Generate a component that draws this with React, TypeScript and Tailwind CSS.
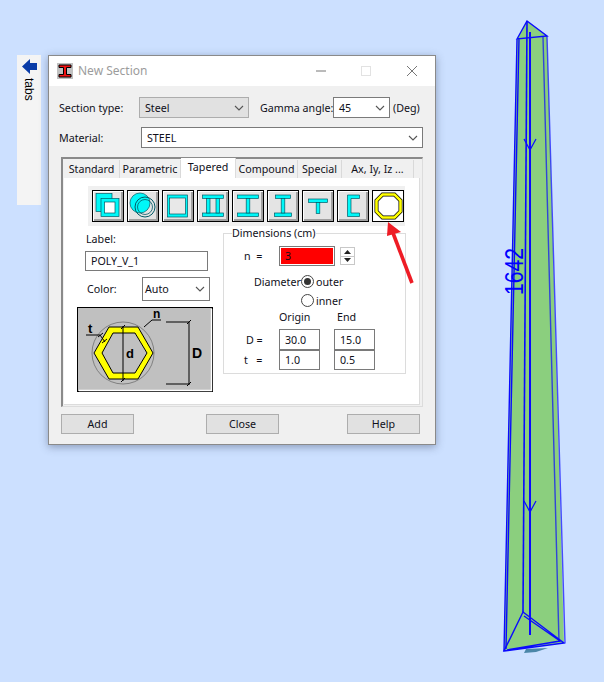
const Chevron = () => (
  <svg width="10" height="6" viewBox="0 0 10 6" className="shrink-0">
    <path d="M1 1l4 4 4-4" fill="none" stroke="#555" strokeWidth="1.1" />
  </svg>
);

const Select = ({ value, className }: { value: string; className: string }) => (
  <div className={`flex items-center justify-between pr-[4px] ${className}`}>
    <span>{value}</span>
    <Chevron />
  </div>
);

const Field = ({ value, className }: { value: string; className: string }) => (
  <div className={`flex items-center border border-[#7a7a7a] ${className}`}>{value}</div>
);

const C = '#00f8f8';
const K = '#005a66';

const TOOL_ICONS = [
  <>
    <rect x="4" y="3.5" width="16" height="18" fill={C} stroke={K} strokeWidth="0.7" />
    <rect x="9" y="8.5" width="18" height="18" fill={C} stroke={K} strokeWidth="0.7" />
    <rect x="12.5" y="12" width="10.5" height="11" fill="#fff" stroke={K} strokeWidth="0.7" />
  </>,
  <>
    <circle cx="13" cy="13" r="10" fill={C} stroke={K} strokeWidth="0.7" />
    <circle cx="18" cy="17" r="10" fill="none" stroke={K} strokeWidth="1" />
    <circle cx="18" cy="17" r="7.5" fill="none" stroke={K} strokeWidth="0.8" />
  </>,
  <>
    <rect x="5.5" y="5" width="20" height="22" fill={C} stroke={K} strokeWidth="0.7" />
    <rect x="7.5" y="8" width="16" height="16" fill="#e8e8e8" stroke={K} strokeWidth="0.7" />
  </>,
  <>
    <rect x="5.5" y="5" width="21" height="3.5" fill={C} stroke={K} strokeWidth="0.7" />
    <rect x="5.5" y="23" width="21" height="3.5" fill={C} stroke={K} strokeWidth="0.7" />
    <rect x="9.5" y="8.5" width="3.5" height="14.5" fill={C} stroke={K} strokeWidth="0.7" />
    <rect x="19" y="8.5" width="3.5" height="14.5" fill={C} stroke={K} strokeWidth="0.7" />
  </>,
  <>
    <rect x="5.5" y="5" width="21" height="3.5" fill={C} stroke={K} strokeWidth="0.7" />
    <rect x="5.5" y="23" width="21" height="3.5" fill={C} stroke={K} strokeWidth="0.7" />
    <rect x="14.2" y="8.5" width="3.6" height="14.5" fill={C} stroke={K} strokeWidth="0.7" />
  </>,
  <>
    <rect x="8.5" y="5" width="15" height="3.5" fill={C} stroke={K} strokeWidth="0.7" />
    <rect x="7.5" y="23" width="17" height="3.5" fill={C} stroke={K} strokeWidth="0.7" />
    <rect x="14.2" y="8.5" width="3.6" height="14.5" fill={C} stroke={K} strokeWidth="0.7" />
  </>,
  <>
    <rect x="6.5" y="9" width="19" height="3.5" fill={C} stroke={K} strokeWidth="0.7" />
    <rect x="14.2" y="12.5" width="3.6" height="11" fill={C} stroke={K} strokeWidth="0.7" />
  </>,
  <>
    <path d="M10.5 5h12v3.5h-8.5v14.5h8.5v3.5h-12z" fill={C} stroke={K} strokeWidth="0.7" />
  </>,
  <>
    <path d="M10.5 4.5h12l6 6v11l-6 6h-12l-6-6v-11z" fill="none" stroke="#000" strokeWidth="4" />
    <path d="M10.5 4.5h12l6 6v11l-6 6h-12l-6-6v-11z" fill="none" stroke="#ffff00" strokeWidth="2.6" />
  </>,
];

const ToolButton = ({ index, selected }: { index: number; selected: boolean }) => (
  <div
    className={`h-[32px] w-[32px] border border-black ${
      selected ? 'bg-white' : 'bg-[#e4e4e4] shadow-[inset_1px_1px_0_#fff,inset_-2px_-2px_0_#a0a0a0]'
    }`}
  >
    <svg width="30" height="30" viewBox="1 1 30 30">
      {TOOL_ICONS[index]}
    </svg>
  </div>
);

const TABS = [
  { label: 'Standard', width: 'w-[56px]' },
  { label: 'Parametric', width: 'w-[61px]' },
  { label: 'Tapered', width: 'w-[55px]', active: true },
  { label: 'Compound', width: 'w-[62px]' },
  { label: 'Special', width: 'w-[44px]' },
  { label: 'Ax, Iy, Iz ...', width: 'w-[72px]' },
];

const SectionPicture = () => (
  <svg width="136" height="85" viewBox="0 0 136 85" className="block">
    <rect x="0.5" y="0.5" width="135" height="84" fill="#c0c0c0" stroke="#000" />
    <path d="M134.5 2v81.5H2" fill="none" stroke="#fff" strokeWidth="1.4" />
    <circle cx="46" cy="46" r="31" fill="none" stroke="#808080" />
    <path
      d="M32 20h29l15 26-15 26H32L17 46zM36 26l-11 20 11 20h22l12-20-12-20z"
      fill="#ffff00"
      stroke="#000"
      fillRule="evenodd"
    />
    <path d="M46 19v55M112 15v63M89 15h23M89 77h23M75 13h9M75 13l-8 7M9 28h14l5 7" fill="none" stroke="#000" />
    <path d="M44 22l4-4M44 75l4-4M110 17l4-4M110 79l4-4M21 30l5-4M25 36l5-4" fill="none" stroke="#000" />
    <text x="49" y="51" fontSize="13" fontWeight="700" fontFamily="Liberation Sans, sans-serif">d</text>
    <text x="115" y="51" fontSize="14" fontWeight="700" fontFamily="Liberation Sans, sans-serif">D</text>
    <text x="76" y="11" fontSize="12" fontWeight="700" fontFamily="Liberation Sans, sans-serif">n</text>
    <text x="11" y="26" fontSize="13" fontWeight="700" fontFamily="Liberation Sans, sans-serif">t</text>
  </svg>
);

const Radio = ({ checked }: { checked?: boolean }) => (
  <span className="flex h-[13px] w-[13px] items-center justify-center rounded-full border border-[#444] bg-white">
    {checked && <span className="h-[7px] w-[7px] rounded-full bg-[#333]" />}
  </span>
);

const SpinTriangle = ({ up }: { up?: boolean }) => (
  <svg width="7" height="4" viewBox="0 0 7 4">
    <path d={up ? 'M3.5 0L7 4H0z' : 'M0 0h7L3.5 4z'} fill="#222" />
  </svg>
);

const Tower = () => (
  <svg width="604" height="682" viewBox="0 0 604 682" className="absolute inset-0">
    <path d="M517 39L527 21 547 36 564 643 504 651z" fill="#8bcf7e" />
    <path d="M526 649l-2 4 12-1 12-4z" fill="#4a86a8" />
    <g fill="none" stroke="#0a0aff" strokeWidth="1.4">
      <path d="M517 39L527 21 547 36zM517 39L504 651M519 39L506 649" />
      <path d="M547 36L565 643M543 37L559 642" strokeOpacity="0.7" />
      <path d="M504 651L564 643 523 612zM507 650L560 641 524 616" />
      <path d="M527 21L523 612" strokeWidth="1.6" />
    </g>
    <path d="M530 32V635" stroke="#0a0aff" strokeWidth="2" />
    <path d="M524 139l6 11 6-11M524 501l6 11 6-11" fill="none" stroke="#0a0aff" strokeWidth="1.2" />
    <text
      transform="translate(523 295) rotate(-90)"
      fontSize="25"
      fill="#0000ff"
      textLength="47"
      lengthAdjust="spacingAndGlyphs"
      fontFamily="Liberation Sans, sans-serif"
    >
      1642
    </text>
  </svg>
);

export default function App() {
  return (
    <div className="relative h-[682px] w-[604px] overflow-hidden bg-[#cce0ff] font-['Noto_Sans',sans-serif] text-[10.7px] leading-[14px] text-[#10101a]">
      <Tower />

      {/* Collapsed tabs strip */}
      <div className="absolute left-[17px] top-[55px] flex h-[150px] w-[24px] flex-col items-center bg-[#f4f4f4] pt-[4px]">
        <svg width="15" height="15" viewBox="0 0 15 15">
          <path d="M0 7.5L8 0v4h7v7H8v4z" fill="#0a3ca8" />
        </svg>
        <span className="mt-[4px] [writing-mode:vertical-rl] font-['Liberation_Sans',sans-serif] text-[12px] leading-[14px] text-black">tabs</span>
      </div>

      {/* New Section window */}
      <div className="absolute left-[48px] top-[55px] h-[390px] w-[388px] border border-[#8a8a8a] bg-[#f0f0f0] shadow-[0_2px_8px_rgba(60,70,100,0.45)]">
        <div className="flex h-[30px] items-center bg-white pl-[8px]">
          <svg width="16" height="16" viewBox="0 0 16 16">
            <rect width="16" height="16" fill="#c0c0c0" />
            <path d="M2 2h12v2.5H9.5v7H14V14H2v-2.5h4.5v-7H2z" fill="#f01010" stroke="#000" />
          </svg>
          <span className="ml-[5px] text-[12px] text-[#9c9c9c]">New Section</span>
          <svg width="101" height="12" viewBox="0 0 101 12" className="ml-auto mr-[18px]">
            <path d="M0 6h10" stroke="#777" />
            <rect x="45.5" y="1.5" width="9" height="9" fill="none" stroke="#e2e2e2" />
            <path d="M91 1l10 10M101 1L91 11" stroke="#777" />
          </svg>
        </div>

        <div className="pl-[12px] pt-[11px]">
          <div className="flex h-[21px] items-center">
            <span className="-ml-[2px] w-[80px] whitespace-nowrap">Section type:</span>
            <Select value="Steel" className="h-[21px] w-[110px] border border-[#adadad] bg-[#e1e1e1] pl-[5px]" />
            <span className="ml-[11px] w-[73px] whitespace-nowrap">Gamma angle:</span>
            <Select value="45" className="h-[21px] w-[57px] border border-[#7a7a7a] bg-white pl-[5px]" />
            <span className="ml-[3px]">(Deg)</span>
          </div>

          <div className="mt-[9px] flex h-[21px] items-center">
            <span className="-ml-[2px] w-[82px]">Material:</span>
            <Select value="STEEL" className="h-[21px] w-[282px] border border-[#7a7a7a] bg-white pl-[5px]" />
          </div>

          {/* Tab control */}
          <div className="mt-[9px] h-[250px] w-[362px] border-l-2 border-t-2 border-r border-b border-l-[#8a8a8a] border-t-[#8a8a8a] border-r-[#dcdcdc] border-b-[#dcdcdc] pl-[1px] pt-[1px]">
            <div className="flex h-[18px] items-end">
              {TABS.map((tab) =>
                tab.active ? (
                  <div key={tab.label} className={`${tab.width} z-10 -mt-[2px] flex h-[20px] items-start justify-center border-r border-[#dcdcdc] bg-white pt-[2px]`}>
                    {tab.label}
                  </div>
                ) : (
                  <div key={tab.label} className={`${tab.width} flex h-[18px] items-center justify-center whitespace-nowrap border-r border-[#d9d9d9] bg-[#f0f0f0]`}>
                    {tab.label}
                  </div>
                ),
              )}
            </div>
            <div className="h-[227px] w-[356px] border-r border-b border-[#dcdcdc] bg-white pt-[8px]">
              <div className="ml-[24px] flex h-[40px] w-[317px] gap-[3px] bg-[#f0f0f0] pl-[4px] pt-[4px]">
                {TOOL_ICONS.map((_, i) => (
                  <ToolButton key={i} index={i} selected={i === 8} />
                ))}
              </div>

              <div className="flex">
                <div className="ml-[13px] w-[136px]">
                  <div className="ml-[9px] mt-[6px]">Label:</div>
                  <Field value="POLY_V_1" className="ml-[8px] mt-[5px] h-[20px] w-[123px] bg-white pl-[5px]" />
                  <div className="mt-[6px] flex items-center">
                    <span className="ml-[10px] w-[55px]">Color:</span>
                    <Select value="Auto" className="h-[24px] w-[68px] border border-[#7a7a7a] bg-white pl-[2px]" />
                  </div>
                  <div className="mt-[6px]">
                    <SectionPicture />
                  </div>
                </div>

                <fieldset className="ml-[10px] h-[148px] w-[183px] border border-[#dcdcdc]">
                  <legend className="ml-[8px] bg-white">Dimensions (cm)</legend>
                  <div className="pl-[20px]">
                    <div className="mt-[6px] flex items-center">
                      <span className="w-[35px]">n&nbsp;&nbsp;=</span>
                      <Field value="3" className="h-[20px] w-[56px] bg-[#ff0000] pl-[5px] shadow-[inset_0_0_0_1px_#fff]" />
                      <div className="ml-[5px] flex h-[18px] w-[15px] flex-col border border-[#c8c8c8]">
                        <span className="flex flex-1 items-center justify-center border-b border-[#c8c8c8]"><SpinTriangle up /></span>
                        <span className="flex flex-1 items-center justify-center"><SpinTriangle /></span>
                      </div>
                    </div>
                    <div className="ml-[10px] mt-[9px] flex h-[13px] items-center">
                      <span className="w-[47px]">Diameter</span>
                      <Radio checked />
                      <span className="ml-[2px]">outer</span>
                    </div>
                    <div className="ml-[57px] mt-[6px] flex h-[13px] items-center">
                      <Radio />
                      <span className="ml-[2px]">inner</span>
                    </div>
                    <div className="mt-[3px] flex h-[14px]">
                      <span className="ml-[35px] w-[58px]">Origin</span>
                      <span>End</span>
                    </div>
                    <div className="mt-[5px] flex h-[21px] items-center">
                      <span className="ml-[2px] w-[33px]">D =</span>
                      <Field value="30.0" className="h-[21px] w-[41px] bg-white pl-[5px]" />
                      <Field value="15.0" className="ml-[14px] h-[21px] w-[41px] bg-white pl-[5px]" />
                    </div>
                    <div className="flex h-[20px] items-center">
                      <span className="w-[35px]">t&nbsp;&nbsp;&nbsp;=</span>
                      <Field value="1.0" className="h-[20px] w-[41px] bg-white pl-[5px]" />
                      <Field value="0.5" className="ml-[14px] h-[20px] w-[41px] bg-white pl-[5px]" />
                    </div>
                  </div>
                </fieldset>
              </div>
            </div>
          </div>

          <div className="mt-[7px] flex">
            <div className="flex h-[20px] w-[73px] items-center justify-center border border-[#adadad] bg-[#e1e1e1]">Add</div>
            <div className="ml-[72px] flex h-[20px] w-[73px] items-center justify-center border border-[#adadad] bg-[#e1e1e1]">Close</div>
            <div className="ml-[68px] flex h-[20px] w-[73px] items-center justify-center border border-[#adadad] bg-[#e1e1e1]">Help</div>
          </div>
        </div>
      </div>

      {/* Red annotation arrow */}
      <svg width="604" height="682" viewBox="0 0 604 682" className="pointer-events-none absolute inset-0">
        <path d="M412 283L393 233" stroke="#ee1c25" strokeWidth="3.6" />
        <path d="M388 222L387 236 401 232z" fill="#ee1c25" />
      </svg>
    </div>
  );
}
